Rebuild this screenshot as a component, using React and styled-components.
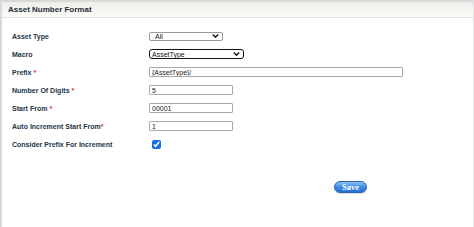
import React from 'react';
import styled, { createGlobalStyle } from 'styled-components';

const GlobalStyle = createGlobalStyle`
  html, body {
    margin: 0;
    padding: 0;
    background: #ffffff;
  }
  body {
    font-family: "Liberation Sans", Arial, sans-serif;
  }
`;

const Panel = styled.div`
  width: 474px;
  height: 227px;
  box-sizing: border-box;
  border-left: 2px solid #d6dadd;
  border-right: 1px solid #e6e6e6;
  background: #ffffff;
`;

const Header = styled.div`
  height: 15px;
  border-top: 2px solid #d9d9d9;
  border-bottom: 1px solid #e2e2dc;
  background: linear-gradient(#eeeeea, #fafaf7);
  padding-left: 6px;
  font-size: 8px;
  font-weight: bold;
  line-height: 15px;
  color: #1f2b36;
`;

const Form = styled.form`
  display: grid;
  grid-template-columns: 137px 1fr;
  grid-auto-rows: 18px;
  padding: 9px 0 0 10px;
`;

const Label = styled.label`
  display: flex;
  align-items: center;
  font-size: 7px;
  font-weight: bold;
  color: #233447;
`;

const Req = styled.span`
  color: #e03333;
  margin-left: ${(p) => (p.$tight ? '0' : '2px')};
`;

const Field = styled.div`
  display: flex;
  align-items: center;
`;

const SelectWrap = styled.div`
  position: relative;
  display: flex;
  width: ${(p) => p.$w}px;
  height: ${(p) => (p.$focused ? 10 : 9)}px;
`;

const Select = styled.select`
  display: block;
  appearance: none;
  width: 100%;
  height: 100%;
  box-sizing: border-box;
  margin: 0;
  padding: 0 0 0 ${(p) => (p.$focused ? 2 : 5)}px;
  font-family: "Liberation Sans", Arial, sans-serif;
  font-size: 7px;
  line-height: 1;
  color: #111;
  background: #fff;
  border: ${(p) => (p.$focused ? '1.5px solid #111' : '1px solid #9a9a9a')};
  border-radius: ${(p) => (p.$focused ? 3 : 2)}px;
  outline: none;
`;

const Chevron = styled.svg`
  position: absolute;
  right: 4px;
  top: 50%;
  width: 7px;
  height: 4px;
  margin-top: -2px;
  pointer-events: none;
`;

const Input = styled.input`
  display: block;
  width: ${(p) => p.$w}px;
  height: 10px;
  box-sizing: border-box;
  margin: 0;
  padding: 0 0 0 2px;
  font-family: "Liberation Sans", Arial, sans-serif;
  font-size: 7px;
  color: #222;
  border: 1px solid #a8a8a8;
  border-radius: 1px;
  outline: none;
`;

const Check = styled.input`
  width: 9px;
  height: 9px;
  margin: 0 0 0 3px;
  accent-color: #1a6fe3;
`;

const Footer = styled.div`
  display: flex;
  justify-content: flex-end;
  padding: 28px 106px 0 0;
`;

const SaveButton = styled.button`
  width: 33px;
  height: 12px;
  padding: 0;
  border: 1px solid #2a64b8;
  border-radius: 7px;
  background: linear-gradient(#8cc0f2, #3c86df 55%, #2a6fd2);
  color: #ffffff;
  font-family: "Liberation Serif", "Times New Roman", serif;
  font-size: 8.5px;
  font-weight: bold;
  line-height: 10px;
  box-shadow: 0 1px 1px rgba(0, 0, 0, 0.15);
`;

const ChevronIcon = () => (
  <Chevron viewBox="0 0 7 4">
    <path d="M0.8 0.6 L3.5 3.2 L6.2 0.6" fill="none" stroke="#111" strokeWidth="1.4" />
  </Chevron>
);

const App = () => {
  return (
    <>
      <GlobalStyle />
      <Panel>
        <Header>Asset Number Format</Header>
        <Form>
          <Label>Asset Type</Label>
          <Field>
            <SelectWrap $w={74}>
              <Select defaultValue="All">
                <option>All</option>
              </Select>
              <ChevronIcon />
            </SelectWrap>
          </Field>

          <Label>Macro</Label>
          <Field>
            <SelectWrap $w={95} $focused>
              <Select $focused defaultValue="AssetType">
                <option>AssetType</option>
              </Select>
              <ChevronIcon />
            </SelectWrap>
          </Field>

          <Label>
            Prefix<Req>*</Req>
          </Label>
          <Field>
            <Input $w={254} defaultValue="{AssetType}/" />
          </Field>

          <Label>
            Number Of Digits<Req>*</Req>
          </Label>
          <Field>
            <Input $w={84} defaultValue="5" />
          </Field>

          <Label>
            Start From<Req>*</Req>
          </Label>
          <Field>
            <Input $w={84} defaultValue="00001" />
          </Field>

          <Label>
            Auto Increment Start From<Req $tight>*</Req>
          </Label>
          <Field>
            <Input $w={84} defaultValue="1" />
          </Field>

          <Label>Consider Prefix For Increment</Label>
          <Field>
            <Check type="checkbox" defaultChecked />
          </Field>
        </Form>
        <Footer>
          <SaveButton type="button">Save</SaveButton>
        </Footer>
      </Panel>
    </>
  );
};

export default App;
